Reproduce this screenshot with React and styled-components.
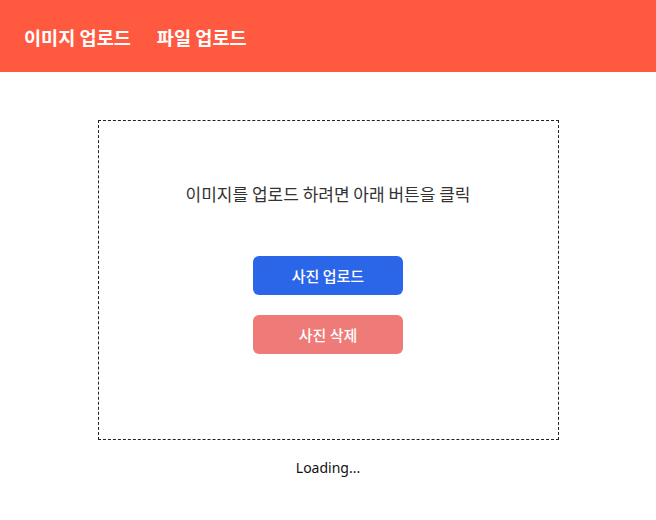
import { createGlobalStyle, styled } from "styled-components";

const GlobalStyle = createGlobalStyle`
  body {
    margin: 0;
    background: #fff;
    font-family: "Noto Sans", "Noto Sans CJK KR", sans-serif;
  }
`;

const Header = styled.header`
  height: 72px;
  background-color: #ff5a40;
  display: flex;
  align-items: center;
  gap: 26px;
  padding: 0 24px;
  box-sizing: border-box;
`;

const Tab = styled.button`
  border: none;
  background: none;
  padding: 0;
  color: #fff;
  font-family: "Noto Sans CJK KR", sans-serif;
  font-size: 18.6px;
  font-weight: 700;
  cursor: pointer;
`;

const Main = styled.main`
  display: flex;
  flex-direction: column;
  align-items: center;
  padding-top: 48px;
`;

const DropBox = styled.div`
  width: 461px;
  height: 320px;
  box-sizing: border-box;
  border: 1px dashed #222;
  display: flex;
  flex-direction: column;
  align-items: center;
  padding-top: 60px;
`;

const Guide = styled.p`
  margin: 0 0 49px;
  font-family: "Noto Sans CJK KR", sans-serif;
  font-size: 17px;
  color: #333;
  line-height: 26px;
`;

const ActionButton = styled.button`
  width: 150px;
  height: 39px;
  border: none;
  border-radius: 6px;
  background-color: ${(p) => (p.$danger ? "#ee7b77" : "#2b66e8")};
  color: #fff;
  font-family: "Noto Sans CJK KR", sans-serif;
  font-size: 15px;
  font-weight: 500;
  margin-bottom: 20px;
  cursor: pointer;
`;

const Status = styled.div`
  margin-top: 18px;
  font-size: 14px;
  color: #111;
`;

export default function App() {
  return (
    <>
      <GlobalStyle />
      <Header>
        <Tab>이미지 업로드</Tab>
        <Tab>파일 업로드</Tab>
      </Header>
      <Main>
        <DropBox>
          <Guide>이미지를 업로드 하려면 아래 버튼을 클릭</Guide>
          <ActionButton>사진 업로드</ActionButton>
          <ActionButton $danger>사진 삭제</ActionButton>
        </DropBox>
        <Status>Loading...</Status>
      </Main>
    </>
  );
}
